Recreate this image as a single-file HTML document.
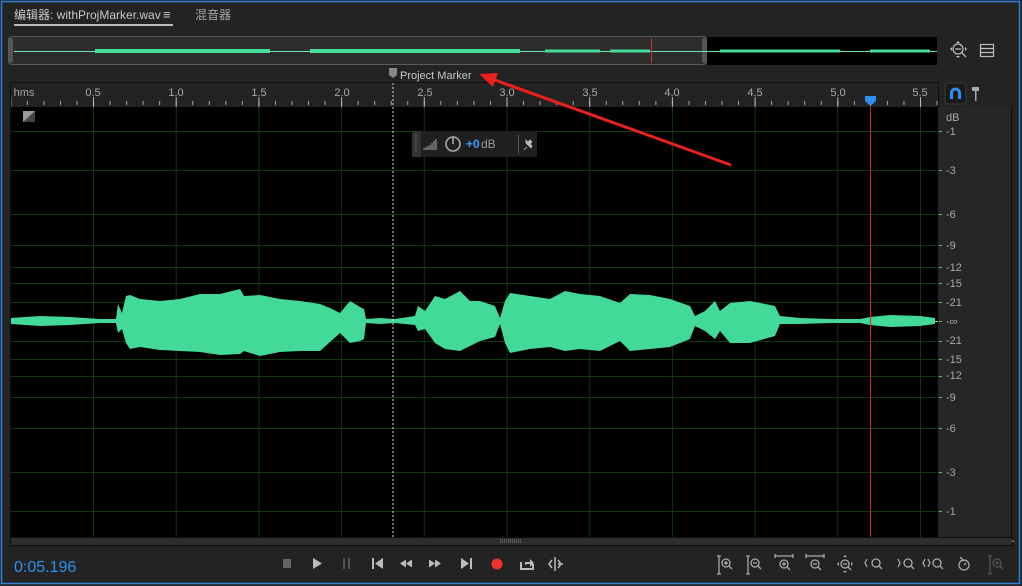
<!DOCTYPE html>
<html><head><meta charset="utf-8"><style>
html,body{margin:0;padding:0;background:#232323;width:1022px;height:586px;overflow:hidden}
svg text{font-family:"Liberation Sans","Noto Sans CJK SC",sans-serif}
</style></head><body>
<svg width="1022" height="586" viewBox="0 0 1022 586" xmlns="http://www.w3.org/2000/svg">
<defs>
<pattern id="minor" x="10.3" y="0" width="16.54" height="586" patternUnits="userSpaceOnUse"><rect x="0" y="101" width="1" height="4" fill="#aaa"/></pattern>
<pattern id="major" x="10.3" y="0" width="82.7" height="586" patternUnits="userSpaceOnUse"><rect x="0" y="97" width="1" height="10" fill="#bbb"/></pattern>
<pattern id="vgrid" x="10.3" y="0" width="82.7" height="586" patternUnits="userSpaceOnUse"><rect x="0" y="0" width="1" height="586" fill="#0a3a0a"/></pattern>
</defs>
<rect width="1022" height="586" fill="#232323"/>
<rect x="1.5" y="1.5" width="1018" height="582" fill="none" stroke="#2d7fd8" stroke-width="1.5"/>
<!-- tabs -->
<text x="14" y="19" font-size="12" fill="#c8c8c8">编辑器: withProjMarker.wav</text>
<text x="163" y="19" font-size="13" fill="#c8c8c8">≡</text>
<rect x="14" y="24" width="159" height="2" fill="#bbb"/>
<text x="195" y="19" font-size="12" fill="#a8a8a8">混音器</text>
<!-- overview -->
<rect x="707" y="37" width="230" height="28" fill="#000"/>
<rect x="8.5" y="36.5" width="698" height="28" rx="3" fill="#2d2d2d" stroke="#5a5a5a"/>
<rect x="9" y="38" width="4" height="25" rx="2" fill="#555"/>
<rect x="702" y="38" width="4" height="25" rx="2" fill="#555"/>
<rect x="14" y="51" width="923" height="1" fill="#6fe0b0"/>
<path d="M95,51h175M310,51h210" stroke="#44dd99" stroke-width="4"/>
<path d="M545,51h55M610,51h40M720,51h120M870,51h60" stroke="#44dd99" stroke-width="3"/>
<rect x="651" y="38" width="1" height="25" fill="#c33"/>
<!-- overview icons -->
<g stroke="#bbb" fill="none" stroke-width="1.3"><circle cx="958" cy="49" r="5"/><path d="M955,49h6M962,53l4,4"/></g>
<path d="M958,41l-2,2h4zM958,58l-2,-2h4zM950,49l2,-2v4zM967,49l-2,-2v4z" fill="#bbb"/>
<g fill="none" stroke="#bbb" stroke-width="1.2"><rect x="980.5" y="44.5" width="13" height="12"/><path d="M981,48.5h12M981,52.5h12"/></g>
<!-- project marker -->
<path d="M389,68h8v7l-4,3l-4,-3z" fill="#888"/>
<text x="400" y="79" font-size="11" fill="#c8c8c8">Project Marker</text>
<!-- ruler -->
<rect x="10.5" y="82.5" width="928" height="455" fill="none" stroke="#0e0e0e"/>
<rect x="11" y="83" width="927" height="24" fill="#232323"/>
<rect x="11" y="83" width="927" height="24" fill="url(#minor)"/>
<rect x="11" y="83" width="927" height="24" fill="url(#major)"/>
<g font-size="11" fill="#a8a8a8" text-anchor="middle">
<text x="24" y="96">hms</text><text x="93" y="96">0.5</text><text x="176" y="96">1.0</text><text x="259" y="96">1.5</text><text x="342" y="96">2.0</text><text x="425" y="96">2.5</text><text x="507" y="96">3.0</text><text x="590" y="96">3.5</text><text x="672" y="96">4.0</text><text x="755" y="96">4.5</text><text x="838" y="96">5.0</text><text x="920" y="96">5.5</text>
</g>
<!-- main -->
<rect x="11" y="107" width="927" height="430" fill="#000"/>
<rect x="12" y="107" width="926" height="430" fill="url(#vgrid)"/>
<g fill="#0a3a0a">
<rect x="11" y="131" width="927" height="1"/><rect x="11" y="170" width="927" height="1"/><rect x="11" y="214" width="927" height="1"/><rect x="11" y="245" width="927" height="1"/><rect x="11" y="267" width="927" height="1"/><rect x="11" y="283" width="927" height="1"/><rect x="11" y="302" width="927" height="1"/><rect x="11" y="341" width="927" height="1"/><rect x="11" y="359" width="927" height="1"/><rect x="11" y="376" width="927" height="1"/><rect x="11" y="397" width="927" height="1"/><rect x="11" y="428" width="927" height="1"/><rect x="11" y="472" width="927" height="1"/><rect x="11" y="511" width="927" height="1"/>
</g>
<rect x="11" y="321" width="927" height="1" fill="#6fe0b0"/>
<path fill="#43d999" d="M11,318 L40,316 L70,317 L100,319 L116,319 L118,304 L122,313 L126,296 L130,295 L140,299 L160,301 L180,299 L200,294 L220,294 L240,289 L244,296 L260,295 L280,299 L300,301 L320,304 L330,308 L340,313 L350,301 L360,307 L364,309 L366,319 L380,318 L395,319 L415,316 L418,306 L425,311 L435,296 L445,299 L460,291 L470,301 L480,301 L495,306 L500,318 L505,301 L510,293 L530,296 L550,299 L565,291 L580,294 L600,296 L620,303 L630,294 L650,295 L670,299 L690,306 L695,316 L705,311 L715,301 L720,311 L730,303 L750,301 L775,306 L780,316 L800,318 L830,319 L860,319 L870,317 L890,315 L920,316 L935,318 L935,324 L920,326 L890,327 L870,325 L860,323 L830,323 L800,324 L780,324 L775,336 L750,343 L730,343 L720,331 L715,339 L705,331 L695,326 L690,339 L670,347 L650,349 L630,351 L620,341 L600,351 L580,349 L565,351 L550,347 L530,349 L510,353 L505,343 L500,324 L495,337 L480,341 L470,346 L460,351 L445,349 L435,343 L425,329 L418,331 L415,325 L395,323 L380,324 L366,323 L364,339 L360,341 L350,343 L340,333 L330,342 L320,351 L300,351 L280,352 L260,356 L244,351 L240,354 L220,355 L200,352 L180,351 L160,350 L140,347 L130,349 L126,343 L122,329 L118,333 L116,323 L100,323 L70,325 L40,326 L11,324 Z"/>
<line x1="393" y1="83" x2="393" y2="537" stroke="#ddd" stroke-dasharray="2,2"/>
<rect x="870" y="97" width="1" height="440" fill="#e02020"/>
<path d="M865,96h11v5l-5.5,5l-5.5,-5z" fill="#2d8ff0"/>
<!-- square icon -->
<rect x="23" y="111" width="12" height="11" fill="#999"/><path d="M23,122L35,111V122Z" fill="#444"/>
<!-- HUD -->
<rect x="412" y="131" width="125" height="26" fill="#1f1f1f"/>
<rect x="412" y="131" width="9" height="26" fill="#333"/>
<path d="M416,135v17" stroke="#888" stroke-dasharray="1,1.5"/>
<path d="M424,150v-2M426,150v-3M428,150v-4M430,150v-5M432,150v-7M434,150v-9M436,150v-11" stroke="#aaa"/>
<circle cx="453" cy="144" r="7" fill="none" stroke="#aaa" stroke-width="1.6"/><path d="M453,137v7" stroke="#aaa" stroke-width="1.6"/>
<text x="466" y="148" font-size="12" fill="#3a9bff" font-weight="bold">+0</text><text x="481" y="148" font-size="12" fill="#999">dB</text>
<rect x="518" y="135" width="1" height="19" fill="#555"/>
<path d="M524,150l3,-3M526,143l5,5l1,-2l-2,-2l2,-2l-2,-2l-2,2l-2,-2z" stroke="#bbb" fill="#bbb" stroke-width="0.8"/>
<!-- arrow -->
<line x1="731" y1="165" x2="492" y2="79" stroke="#e82020" stroke-width="3"/>
<path d="M479,74L498,73L493,87Z" fill="#e82020"/>
<!-- dB scale -->
<rect x="938" y="107" width="74" height="430" fill="#262626"/>
<rect x="1011" y="107" width="1" height="431" fill="#0e0e0e"/>
<g font-size="11" fill="#a8a8a8">
<text x="946" y="121">dB</text><text x="946" y="135">-1</text><text x="946" y="174">-3</text><text x="946" y="218">-6</text><text x="946" y="249">-9</text><text x="946" y="271">-12</text><text x="946" y="287">-15</text><text x="946" y="306">-21</text><text x="946" y="325">-∞</text><text x="946" y="344">-21</text><text x="946" y="363">-15</text><text x="946" y="379">-12</text><text x="946" y="401">-9</text><text x="946" y="432">-6</text><text x="946" y="476">-3</text><text x="946" y="515">-1</text>
</g>
<g fill="#999"><rect x="939" y="131" width="3" height="1"/><rect x="939" y="170" width="3" height="1"/><rect x="939" y="214" width="3" height="1"/><rect x="939" y="245" width="3" height="1"/><rect x="939" y="267" width="3" height="1"/><rect x="939" y="283" width="3" height="1"/><rect x="939" y="302" width="3" height="1"/><rect x="939" y="321" width="3" height="1"/><rect x="939" y="341" width="3" height="1"/><rect x="939" y="359" width="3" height="1"/><rect x="939" y="376" width="3" height="1"/><rect x="939" y="397" width="3" height="1"/><rect x="939" y="428" width="3" height="1"/><rect x="939" y="472" width="3" height="1"/><rect x="939" y="511" width="3" height="1"/></g>
<!-- ruler right icons -->
<rect x="945" y="83" width="21" height="21" rx="2" fill="#1a1a1a" stroke="#3a3a3a"/>
<path d="M950,99v-6a5.5,5.5 0 0 1 11,0v6h-3v-6a2.5,2.5 0 0 0 -5,0v6z" fill="#2d8ff0"/>
<rect x="972" y="87" width="7" height="4" fill="#aaa"/><rect x="975" y="90" width="1.5" height="11" fill="#aaa"/>
<!-- scrollbar -->
<rect x="11" y="537" width="1001" height="8" fill="#2e2e2e"/>
<rect x="10.5" y="537.5" width="1002" height="8" fill="none" stroke="#0e0e0e"/>
<path d="M500,540h22M500,542h22" stroke="#888" stroke-dasharray="1,1"/>
<path d="M1011,542l2,-2l2,2z" fill="#777"/>
<!-- time -->
<text x="14" y="572" font-size="16" fill="#2d8ff0">0:05.196</text>
<!-- transport -->
<rect x="283" y="559" width="8" height="9" fill="#666"/>
<path d="M313,558v11l9,-5.5z" fill="#bbb"/>
<path d="M343,558h2v11h-2zM348,558h2v11h-2z" fill="#555"/>
<path d="M372,558h2v11h-2zM383,558v11l-8,-5.5z" fill="#bbb"/>
<path d="M400,563.5l6,-4v8zM406,563.5l6,-4v8z" fill="#bbb"/>
<path d="M429,559.5v8l6,-4zM435,559.5v8l6,-4z" fill="#bbb"/>
<path d="M461,558v11l8,-5.5zM470,558h2v11h-2z" fill="#bbb"/>
<circle cx="497" cy="564" r="5.5" fill="#ee3333"/>
<path d="M521,562v7h12v-5" stroke="#bbb" stroke-width="2" fill="none"/><path d="M525,565v-3h5v-3l4,4l-4,4v-3h-3" fill="#bbb"/>
<path d="M552,560l-3,4l3,4M555,557v14M558,560l3,4l-3,4M558,564h5" stroke="#bbb" stroke-width="1.5" fill="none"/>
<!-- zoom icons -->
<g stroke="#aaa" stroke-width="1.3" fill="none">
<path d="M719,556v18M717,556h4M717,574h4"/><circle cx="726" cy="563" r="4"/><path d="M729,566l3,3M724,563h4M726,561v4"/>
<path d="M748,556v18M746,556h4M746,574h4"/><circle cx="755" cy="563" r="4"/><path d="M758,566l3,3M753,563h4"/>
<path d="M775,556h18M775,554v4M793,554v4"/><circle cx="784" cy="564" r="4"/><path d="M787,567l3,3M782,564h4M784,562v4"/>
<path d="M806,556h18M806,554v4M824,554v4"/><circle cx="815" cy="564" r="4"/><path d="M818,567l3,3M813,564h4"/>
<circle cx="845" cy="564" r="4"/><path d="M848,567l3,3M843,564h4"/>
<path d="M867,559l-2,4l2,4"/><circle cx="876" cy="563" r="4"/><path d="M879,566l3,3"/>
<path d="M898,559l2,4l-2,4"/><circle cx="908" cy="563" r="4"/><path d="M911,566l3,3"/>
<path d="M925,559l-2,4l2,4M928,559l2,4l-2,4"/><circle cx="937" cy="563" r="4"/><path d="M940,566l3,3"/>
<circle cx="964" cy="565" r="5"/><path d="M960,557l4,4M964,565l2,-2"/>
</g>
<path d="M845,555l-2,2h4zM845,573l-2,-2h4zM837,564l2,-2v4zM853,564l-2,-2v4z" fill="#aaa"/>
<g stroke="#555" stroke-width="1.3" fill="none"><path d="M990,556v18M988,556h4M988,574h4"/><circle cx="997" cy="563" r="4"/><path d="M1000,566l3,3M995,563h4M997,561v4"/></g>
</svg>
</body></html>
